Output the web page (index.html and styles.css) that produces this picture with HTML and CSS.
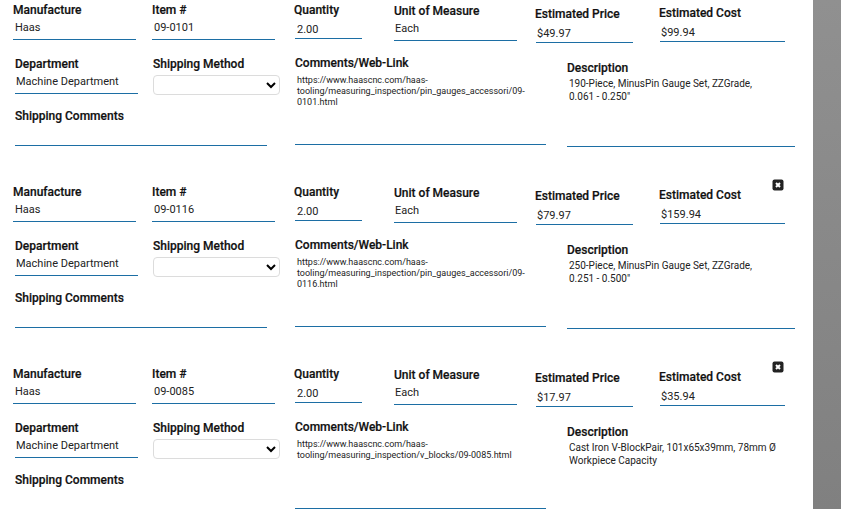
FILE: index.html
```html
<!DOCTYPE html>
<html lang="en">
<head>
<meta charset="utf-8">
<title>Items</title>
<link rel="stylesheet" href="styles.css">
</head>
<body>
<div class="page">
<main class="list">
  <section class="card">
    <div class="row-a">
      <div class="field f-man"><div class="label">Manufacture</div><div class="value">Haas</div></div>
      <div class="field f-item"><div class="label">Item #</div><div class="value">09-0101</div></div>
      <div class="field f-qty"><div class="label">Quantity</div><div class="value">2.00</div></div>
      <div class="field f-uom"><div class="label">Unit of Measure</div><div class="value">Each</div></div>
      <div class="field f-price"><div class="label">Estimated Price</div><div class="value">$49.97</div></div>
      <div class="field f-cost"><div class="label">Estimated Cost</div><div class="value">$99.94</div></div>
    </div>
    <div class="row-b">
      <div class="left">
        <div class="left-top">
          <div class="field f-dept"><div class="label">Department</div><div class="value">Machine Department</div></div>
          <div class="field f-ship"><div class="label">Shipping Method</div><select class="select" aria-label="Shipping Method"><option></option></select></div>
        </div>
        <div class="field f-shipc"><div class="label">Shipping Comments</div><div class="value tall"></div></div>
      </div>
      <div class="field f-comm"><div class="label">Comments/Web-Link</div><div class="value small">https://www.haascnc.com/haas-tooling/measuring_inspection/pin_gauges_accessori/09-0101.html</div></div>
      <div class="field f-desc"><div class="label">Description</div><div class="value desc">190-Piece, MinusPin Gauge Set, ZZGrade, 0.061 - 0.250"</div></div>
    </div>
  </section>

  <section class="card">
    <span class="close"><svg viewBox="0 0 12 12" width="12" height="12"><rect x="0.5" y="0.5" width="11" height="11" rx="2" fill="#222"/><path d="M4 4l4 4M8 4l-4 4" stroke="#fff" stroke-width="2"/></svg></span>
    <div class="row-a">
      <div class="field f-man"><div class="label">Manufacture</div><div class="value">Haas</div></div>
      <div class="field f-item"><div class="label">Item #</div><div class="value">09-0116</div></div>
      <div class="field f-qty"><div class="label">Quantity</div><div class="value">2.00</div></div>
      <div class="field f-uom"><div class="label">Unit of Measure</div><div class="value">Each</div></div>
      <div class="field f-price"><div class="label">Estimated Price</div><div class="value">$79.97</div></div>
      <div class="field f-cost"><div class="label">Estimated Cost</div><div class="value">$159.94</div></div>
    </div>
    <div class="row-b">
      <div class="left">
        <div class="left-top">
          <div class="field f-dept"><div class="label">Department</div><div class="value">Machine Department</div></div>
          <div class="field f-ship"><div class="label">Shipping Method</div><select class="select" aria-label="Shipping Method"><option></option></select></div>
        </div>
        <div class="field f-shipc"><div class="label">Shipping Comments</div><div class="value tall"></div></div>
      </div>
      <div class="field f-comm"><div class="label">Comments/Web-Link</div><div class="value small">https://www.haascnc.com/haas-tooling/measuring_inspection/pin_gauges_accessori/09-0116.html</div></div>
      <div class="field f-desc"><div class="label">Description</div><div class="value desc">250-Piece, MinusPin Gauge Set, ZZGrade, 0.251 - 0.500"</div></div>
    </div>
  </section>

  <section class="card">
    <span class="close"><svg viewBox="0 0 12 12" width="12" height="12"><rect x="0.5" y="0.5" width="11" height="11" rx="2" fill="#222"/><path d="M4 4l4 4M8 4l-4 4" stroke="#fff" stroke-width="2"/></svg></span>
    <div class="row-a">
      <div class="field f-man"><div class="label">Manufacture</div><div class="value">Haas</div></div>
      <div class="field f-item"><div class="label">Item #</div><div class="value">09-0085</div></div>
      <div class="field f-qty"><div class="label">Quantity</div><div class="value">2.00</div></div>
      <div class="field f-uom"><div class="label">Unit of Measure</div><div class="value">Each</div></div>
      <div class="field f-price"><div class="label">Estimated Price</div><div class="value">$17.97</div></div>
      <div class="field f-cost"><div class="label">Estimated Cost</div><div class="value">$35.94</div></div>
    </div>
    <div class="row-b">
      <div class="left">
        <div class="left-top">
          <div class="field f-dept"><div class="label">Department</div><div class="value">Machine Department</div></div>
          <div class="field f-ship"><div class="label">Shipping Method</div><select class="select" aria-label="Shipping Method"><option></option></select></div>
        </div>
        <div class="field f-shipc"><div class="label">Shipping Comments</div><div class="value tall"></div></div>
      </div>
      <div class="field f-comm"><div class="label">Comments/Web-Link</div><div class="value small">https://www.haascnc.com/haas-tooling/measuring_inspection/v_blocks/09-0085.html</div></div>
      <div class="field f-desc"><div class="label">Description</div><div class="value desc">Cast Iron V-BlockPair, 101x65x39mm, 78mm Ø Workpiece Capacity</div></div>
    </div>
  </section>
</main>
<div class="scrollbar"></div>
</div>
</body>
</html>
```
FILE: styles.css
```css
* { box-sizing: border-box; }
html, body { margin: 0; padding: 0; background: #fff; overflow: hidden; }
body { font-family: Roboto, "Liberation Sans", sans-serif; color: #1c1c1c; }
.page { display: flex; width: 841px; height: 509px; overflow: hidden; }
.list { width: 813px; height: 509px; overflow: hidden; }
.scrollbar { width: 28px; height: 509px; background: linear-gradient(#909090, #808080); }
.card { position: relative; height: 182px; }
.close { position: absolute; left: 772px; top: -3px; width: 12px; height: 12px; display: block; line-height: 0; }

.row-a { display: flex; align-items: flex-start; height: 54px; }
.row-b { display: flex; align-items: flex-start; }
.left { width: 280px; flex: none; }
.left-top { display: flex; align-items: flex-start; }

.field { flex: none; }
.label { font-size: 12px; font-weight: 500; line-height: 16px; color: #111; white-space: nowrap; -webkit-text-stroke: 0.2px #111; }
.value { font-size: 11px; line-height: 14px; height: 22px; padding: 3px 0 0 2px; border-bottom: 1px solid #1c6ea4; color: #222; }

.f-man { margin: 2px 0 0 13px; width: 123px; }
.f-item { margin: 2px 0 0 16px; width: 123px; }
.f-qty { margin: 2px 0 0 19px; width: 68px; }
.f-qty .value { height: 21px; padding-top: 5px; padding-left: 2px; margin-left: 1px; }
.f-uom { margin: 3px 0 0 32px; width: 123px; }
.f-uom .value { padding-left: 1px; }
.f-price { margin: 6px 0 0 18px; width: 98px; }
.f-price .value { height: 21px; padding-top: 5px; margin-left: 1px; padding-left: 1px; }
.f-cost { margin: 5px 0 0 26px; width: 126px; }
.f-cost .value { height: 21px; padding-top: 5px; margin-left: 1px; padding-left: 1px; }

.f-dept { margin: 2px 0 0 15px; width: 123px; }
.f-dept .value { padding-left: 1px; }
.f-ship { margin: 2px 0 0 15px; width: 127px; }
.select { display: block; width: 127px; height: 20px; margin-top: 3px; border: 1px solid #dcdcdc; border-radius: 4px; background: #fff; font-size: 11px; font-family: inherit; }
.f-shipc { margin: 13px 0 0 15px; width: 252px; }
.f-shipc .tall { height: 22px; padding: 0; }
.f-comm { margin: 1px 0 0 15px; width: 251px; }
.small { font-size: 9px; line-height: 10.8px; height: 74px; padding: 4px 18px 0 2px; overflow-wrap: anywhere; }
.f-desc { margin: 6px 0 0 21px; width: 228px; }
.desc { font-size: 10px; line-height: 13px; height: 71px; padding: 1px 18px 0 2px; }
```
